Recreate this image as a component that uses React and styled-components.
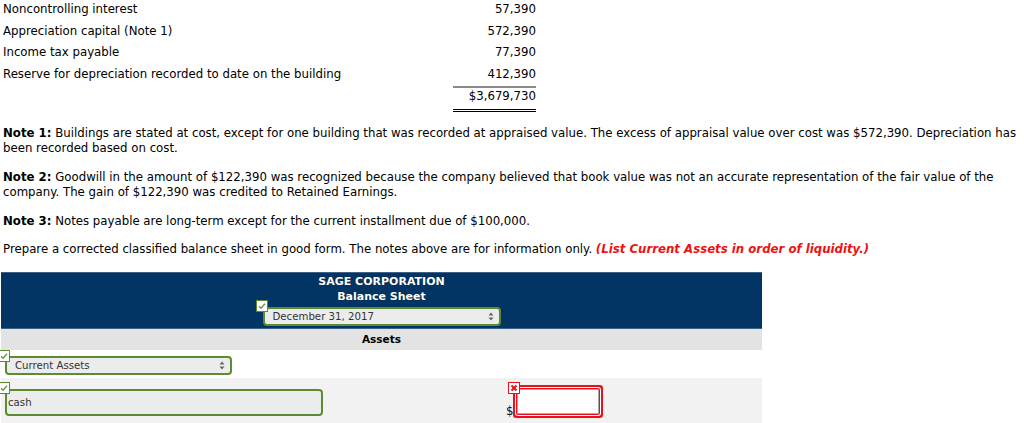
import React from "react";
import styled, { createGlobalStyle } from "styled-components";

const Global = createGlobalStyle`
  html, body { margin: 0; padding: 0; background: #fff; }
  body {
    font-family: "DejaVu Sans", Verdana, sans-serif;
    font-size: 11.75px;
    color: #000;
  }
`;

const Page = styled.div`
  width: 1024px;
  height: 423px;
  overflow: hidden;
`;

const Summary = styled.table`
  border-collapse: collapse;
  width: 536px;
`;

const Label = styled.td`
  padding: 2px 0 4px 3px;
  line-height: 15.5px;
  white-space: nowrap;
`;

const Amount = styled.td`
  width: 83px;
  padding: ${(p) => (p.$total ? "1px 0 4px" : "2px 0 4px")};
  line-height: 15.5px;
  text-align: right;
  white-space: nowrap;
  border-top: ${(p) => (p.$total ? "2px solid #8a8a8a" : "none")};
  border-bottom: ${(p) => (p.$total ? "3px double #000" : "none")};
`;

const Notes = styled.div`
  margin-top: 14px;
  padding: 0 3px;
`;

const Para = styled.p`
  margin: 0 0 13px;
  line-height: 15.5px;
`;

const Warn = styled.b`
  color: #ee1111;
  font-style: italic;
`;

const Sheet = styled.div`
  margin: 14px 0 0 1px;
  width: 761px;
`;

const Header = styled.div`
  background: #023563;
  border-top: 1px solid #3d6187;
  border-bottom: 1px solid #3d6187;
  padding: 1px 0 2px;
  text-align: center;
  color: #fff;
  font-size: 11px;
  font-weight: bold;
  line-height: 15px;
  text-shadow: 0 0 1px #0b1c30;
`;

const DateWrap = styled.div`
  display: flex;
  justify-content: center;
  margin-top: 3px;
`;

const Field = styled.div`
  position: relative;
  box-sizing: border-box;
  width: ${(p) => p.$w}px;
  height: ${(p) => p.$h}px;
  border: 2px solid #5b8d30;
  border-radius: 4px;
  background: #ececec;
  display: flex;
  align-items: center;
  justify-content: space-between;
  padding: 0 5px 0 ${(p) => p.$pl}px;
  color: #333;
  font-size: 10.2px;
  font-weight: normal;
  text-shadow: none;
  text-align: left;
  line-height: 15px;
`;

const Badge = styled.span`
  position: absolute;
  left: ${(p) => p.$l}px;
  top: ${(p) => p.$t}px;
  width: 12px;
  height: 12px;
  display: block;
`;

const Band = styled.div`
  background: #e3e3e3;
  height: 21px;
  line-height: 21px;
  text-align: center;
  font-size: 10.5px;
  font-weight: bold;
`;

const Row = styled.div`
  display: flex;
  align-items: flex-start;
  background: ${(p) => p.$bg};
  height: ${(p) => p.$h}px;
  padding-top: ${(p) => p.$pt}px;
  padding-left: 4px;
  box-sizing: border-box;
`;

const LabelCell = styled.div`
  width: 501px;
  flex: none;
`;

const AmountCell = styled.div`
  display: flex;
  align-items: flex-end;
  gap: 3px;
`;

const Dollar = styled.span`
  line-height: 13px;
  margin-bottom: -4px;
  color: #111;
`;

const ErrWrap = styled.div`
  position: relative;
  margin-left: 1px;
`;

const ErrInput = styled.div`
  width: 82px;
  height: 25px;
  box-sizing: border-box;
  border: 1px solid #a9a9a9;
  background: #fff;
  border-radius: 1px;
  box-shadow: 0 0 0 1px #e8101a, 0 0 0 2px #fff, 0 0 0 4px #e8101a;
`;

const Check = ({ l, t }) => (
  <Badge $l={l} $t={t}>
    <svg width="12" height="12" viewBox="0 0 12 12">
      <rect x="0.5" y="0.5" width="11" height="11" fill="#fff" stroke="#5b8d30" />
      <polyline points="3,6.2 5,8.2 9,3.8" fill="none" stroke="#5f9a3a" strokeWidth="1.3" />
    </svg>
  </Badge>
);

const Cross = ({ l, t }) => (
  <Badge $l={l} $t={t}>
    <svg width="12" height="12" viewBox="0 0 12 12">
      <rect x="0.5" y="0.5" width="11" height="11" fill="#fff" stroke="#e8101a" />
      <path d="M3.5 3.5 L8.5 8.5 M8.5 3.5 L3.5 8.5" stroke="#e8101a" strokeWidth="2" />
    </svg>
  </Badge>
);

const Arrows = () => (
  <svg width="6" height="9" viewBox="0 0 6 9">
    <path d="M0.5 3.5 L3 0.5 L5.5 3.5 Z M0.5 5.5 L3 8.5 L5.5 5.5 Z" fill="#666" />
  </svg>
);

const rows = [
  ["Noncontrolling interest", "57,390"],
  ["Appreciation capital (Note 1)", "572,390"],
  ["Income tax payable", "77,390"],
  ["Reserve for depreciation recorded to date on the building", "412,390"],
];

export default function App() {
  return (
    <Page>
      <Global />
      <Summary>
        <tbody>
          {rows.map(([l, a]) => (
            <tr key={l}>
              <Label>{l}</Label>
              <Amount>{a}</Amount>
            </tr>
          ))}
          <tr>
            <Label />
            <Amount $total>$3,679,730</Amount>
          </tr>
        </tbody>
      </Summary>
      <Notes>
        <Para>
          <b>Note 1:</b> Buildings are stated at cost, except for one building that was recorded at appraised value. The excess of appraisal value over cost was $572,390. Depreciation has been recorded based on cost.
        </Para>
        <Para>
          <b>Note 2:</b> Goodwill in the amount of $122,390 was recognized because the company believed that book value was not an accurate representation of the fair value of the company. The gain of $122,390 was credited to Retained Earnings.
        </Para>
        <Para>
          <b>Note 3:</b> Notes payable are long-term except for the current installment due of $100,000.
        </Para>
        <Para>
          Prepare a corrected classified balance sheet in good form. The notes above are for information only. <Warn>(List Current Assets in order of liquidity.)</Warn>
        </Para>
      </Notes>
      <Sheet>
        <Header>
          <div>SAGE CORPORATION</div>
          <div>Balance Sheet</div>
          <DateWrap>
            <Field $w={238} $h={19} $pl={8}>
              <Check l={-9} t={-9} />
              <span>December 31, 2017</span>
              <Arrows />
            </Field>
          </DateWrap>
        </Header>
        <Band>Assets</Band>
        <Row $bg="#fff" $h={28} $pt={6}>
          <Field $w={227} $h={19} $pl={8}>
            <Check l={-9} t={-8} />
            <span>Current Assets</span>
            <Arrows />
          </Field>
        </Row>
        <Row $bg="#f2f2f2" $h={46} $pt={11}>
          <LabelCell>
            <Field $w={318} $h={27} $pl={1}>
              <Check l={-9} t={-9} />
              <span>cash</span>
            </Field>
          </LabelCell>
          <AmountCell>
            <Dollar>$</Dollar>
            <ErrWrap>
              <Cross l={-9} t={-7} />
              <ErrInput />
            </ErrWrap>
          </AmountCell>
        </Row>
      </Sheet>
    </Page>
  );
}
